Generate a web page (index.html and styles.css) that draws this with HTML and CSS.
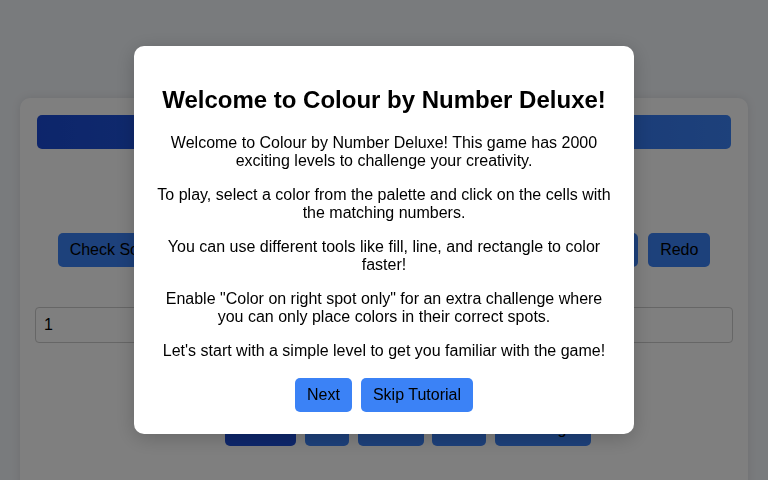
FILE: index.html
```html
<!DOCTYPE html>
<html lang="en">
<head>
<meta charset="utf-8">
<title>Colour by Number Deluxe</title>
<link rel="stylesheet" href="styles.css">
</head>
<body>
<div class="page">
  <main class="game-card">
    <div class="level-bar"></div>

    <div class="actions">
      <button class="btn">Check Solution</button>
      <button class="btn">Show Hint</button>
      <button class="btn">Reset Puzzle</button>
      <button class="btn">Save Progress</button>
      <button class="btn">Undo</button>
      <button class="btn">Redo</button>
    </div>

    <input class="level-input" type="number" value="1" min="1" max="2000">

    <div class="palette">
      <span class="swatch swatch-1"></span>
      <span class="swatch swatch-2"></span>
      <span class="swatch swatch-3"></span>
      <span class="swatch swatch-4"></span>
      <span class="swatch swatch-5"></span>
      <span class="swatch swatch-6"></span>
    </div>

    <div class="tools">
      <span class="tools-label">Tools:</span>
      <button class="btn tool active">Pencil</button>
      <button class="btn tool">Fill</button>
      <button class="btn tool">Erase</button>
      <button class="btn tool">Line</button>
      <button class="btn tool">Rectangle</button>
    </div>
  </main>
</div>

<div class="overlay">
  <div class="modal" role="dialog" aria-labelledby="tutorial-title">
    <h2 id="tutorial-title" class="modal-title">Welcome to Colour by Number Deluxe!</h2>
    <p>Welcome to Colour by Number Deluxe! This game has 2000 exciting levels to challenge your creativity.</p>
    <p>To play, select a color from the palette and click on the cells with the matching numbers.</p>
    <p>You can use different tools like fill, line, and rectangle to color faster!</p>
    <p>Enable "Color on right spot only" for an extra challenge where you can only place colors in their correct spots.</p>
    <p>Let's start with a simple level to get you familiar with the game!</p>
    <div class="modal-actions">
      <button class="btn modal-btn">Next</button>
      <button class="btn modal-btn">Skip Tutorial</button>
    </div>
  </div>
</div>
</body>
</html>
```

FILE: styles.css
```css
* {
  box-sizing: border-box;
}

body {
  margin: 0;
  background: #f3f6fa;
  font-family: "Liberation Sans", Arial, Helvetica, sans-serif;
  font-size: 16px;
  color: #000;
}

.page {
  padding: 98px 20px 20px;
}

/* main game panel */
.game-card {
  background: #fff;
  border-radius: 10px;
  padding: 17px 15px;
  min-height: 520px;
  box-shadow: 0 0 10px rgba(0, 0, 0, 0.1);
}

.level-bar {
  height: 34px;
  margin: 0 2px;
  border-radius: 5px;
  background: linear-gradient(to right, #1a4bd6, #3b82f6);
}

.btn {
  font-family: inherit;
  font-size: 16px;
  line-height: normal;
  padding: 8px 12px;
  border: none;
  border-radius: 5px;
  background: #3b82f6;
  color: #000;
  cursor: pointer;
}

.actions {
  display: flex;
  justify-content: center;
  gap: 10.5px;
  margin: 84px 0 40px;
}

.level-input {
  display: block;
  width: 100%;
  margin: 0;
  padding: 8px;
  font-family: inherit;
  font-size: 16px;
  line-height: normal;
  border: 1px solid #ccc;
  border-radius: 4px;
  background: #fff;
  color: #000;
}

/* colour swatches */
.palette {
  display: flex;
  justify-content: center;
  gap: 8px;
  margin: 19px 0 20px;
}

.swatch {
  width: 30px;
  height: 30px;
  border-radius: 4px;
}

.swatch-1 { background: #ef4444; }
.swatch-2 { background: #f59e0b; }
.swatch-3 { background: #facc15; }
.swatch-4 { background: #22c55e; }
.swatch-5 { background: #3b82f6; }
.swatch-6 { background: #a855f7; }

.tools {
  display: flex;
  justify-content: center;
  align-items: center;
  gap: 8.5px;
}

.tools-label {
  margin-right: -2.5px;
}

.tool.active {
  background: #1d4ed8;
  padding: 8px 14px;
}

/* tutorial dialog */
.overlay {
  position: fixed;
  inset: 0;
  background: rgba(0, 0, 0, 0.5);
  display: flex;
  align-items: center;
  justify-content: center;
}

.modal {
  width: 500px;
  padding: 20px 20px 22px;
  background: #fff;
  border-radius: 10px;
  text-align: center;
  box-shadow: 0 4px 20px rgba(0, 0, 0, 0.2);
}

.modal-title {
  margin: 20px 0;
  font-size: 24px;
}

.modal p {
  margin: 16px 0;
  line-height: 18px;
}

.modal-actions {
  display: flex;
  justify-content: center;
  gap: 9px;
  margin-top: 18px;
}
```
